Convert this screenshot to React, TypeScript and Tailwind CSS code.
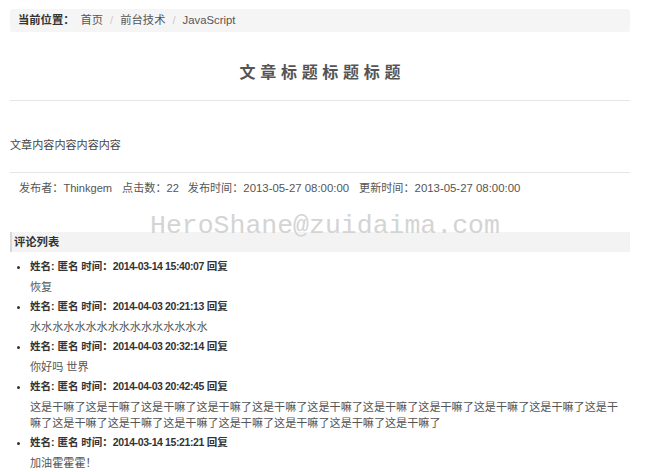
import React from "react";

const comments = [
  { time: "2014-03-14 15:40:07", text: "恢复" },
  { time: "2014-04-03 20:21:13", text: "水水水水水水水水水水水水水水水水" },
  { time: "2014-04-03 20:32:14", text: "你好吗 世界" },
  { time: "2014-04-03 20:42:45", text: "这是干嘛了".repeat(18) },
  { time: "2014-03-14 15:21:21", text: "加油霍霍霍！" },
];

export default function App() {
  return (
    <div className="relative min-h-[472px] bg-white font-['Liberation_Sans','Noto_Sans_CJK_SC',sans-serif] text-[11.1px] text-[#555]">
      <div className="ml-[10px] w-[620px]">
        {/* breadcrumb */}
        <div className="mt-[9px] flex h-[23px] items-center rounded-[3px] bg-[#f5f5f5] pl-[8px] text-[11.3px]">
          <span className="font-bold text-[#333]">当前位置：</span>
          <span className="ml-[6px]">首页</span>
          <span className="px-[7px] text-[#ccc]">/</span>
          <span>前台技术</span>
          <span className="px-[7px] text-[#ccc]">/</span>
          <span>JavaScript</span>
        </div>

        {/* title */}
        <div className="mt-[31px] pl-[4.7px] text-center text-[16px] font-bold leading-[20px] tracking-[4.7px] text-[#555]">
          文章标题标题标题
        </div>
        <div className="mt-[17px] border-t border-[#e5e5e5]" />

        {/* content */}
        <div className="mt-[36px] leading-[16px] text-[#444]">文章内容内容内容内容</div>
        <div className="mt-[19px] border-t border-[#e5e5e5]" />

        {/* meta */}
        <div className="mt-[7px] flex pl-[9px] leading-[16px] text-[#555]">
          <span className="mr-[10px]">发布者：Thinkgem</span>
          <span className="mr-[9px]">点击数：22</span>
          <span className="mr-[10px]">
            发布时间：<span className="text-[11.4px]">2013-05-27 08:00:00</span>
          </span>
          <span>
            更新时间：<span className="text-[11.4px]">2013-05-27 08:00:00</span>
          </span>
        </div>

        {/* comment list header */}
        <div className="mt-[36px] flex h-[20px] items-center border-l-2 border-[#d8d8d8] bg-[#f3f3f3] pl-[2px] text-[11.3px] font-bold text-[#333]">
          评论列表
        </div>

        <ul className="mt-[5px] list-disc pl-[20px] pr-[8px] marker:text-[#333]">
          {comments.map((c, i) => (
            <li key={i} className="mt-[2px]">
              <div className="h-[18px] text-[10.5px] font-bold leading-[18px] text-[#333]">
                姓名: 匿名 时间：<span className="tracking-[-0.4px]">{c.time}</span> 回复
              </div>
              <div className="mt-[4px] leading-[16px] text-[#555]">{c.text}</div>
            </li>
          ))}
        </ul>
      </div>

      {/* watermark */}
      <div className="pointer-events-none absolute left-[150px] top-[204px] font-['Liberation_Mono',monospace] text-[26.5px] leading-[26px] text-[#d4d4d4]">
        HeroShane@zuidaima.com
      </div>
    </div>
  );
}
